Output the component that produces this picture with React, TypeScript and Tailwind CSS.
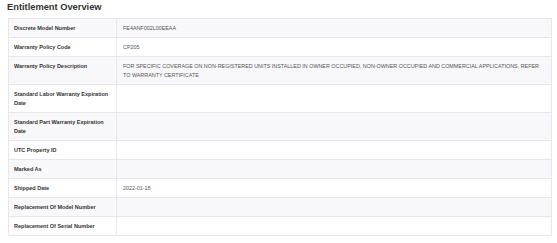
const rows: { label: string; value: string }[] = [
    { label: "Discrete Model Number", value: "FE4ANF002L00EEAA" },
    { label: "Warranty Policy Code", value: "CP205" },
    {
        label: "Warranty Policy Description",
        value:
            "FOR SPECIFIC COVERAGE ON NON-REGISTERED UNITS INSTALLED IN OWNER OCCUPIED, NON-OWNER OCCUPIED AND COMMERCIAL APPLICATIONS, REFER TO WARRANTY CERTIFICATE",
    },
    { label: "Standard Labor Warranty Expiration Date", value: "" },
    { label: "Standard Part Warranty Expiration Date", value: "" },
    { label: "UTC Property ID", value: "" },
    { label: "Marked As", value: "" },
    { label: "Shipped Date", value: "2022-01-18" },
    { label: "Replacement Of Model Number", value: "" },
    { label: "Replacement Of Serial Number", value: "" },
];

export default function App() {
    return (
        <div className="w-[557px] h-[243px] bg-white px-[8px] pt-[2px] font-['Liberation_Sans',Arial,sans-serif] overflow-hidden">
            <h2 className="text-[9.3px] leading-[11px] font-bold text-[#333] mb-[5px] -ml-px">
                Entitlement Overview
            </h2>
            <table className="w-[544px] border-collapse table-fixed">
                <colgroup>
                    <col className="w-[108px]" />
                    <col />
                </colgroup>
                <tbody>
                    {rows.map((row, i) => (
                        <tr key={row.label} className={i % 2 === 0 ? "bg-[#f8f8fa]" : "bg-white"}>
                            <td className="border border-[#e6e6eb] px-[5px] pt-[5px] pb-[4px] align-top text-[5.5px] leading-[9px] font-bold text-[#333]">
                                {row.label}
                            </td>
                            <td className="border border-[#e6e6eb] px-[6px] pt-[5px] pb-[4px] align-top text-[5.4px] leading-[9px] text-[#555]">
                                {row.value}
                            </td>
                        </tr>
                    ))}
                </tbody>
            </table>
        </div>
    );
}
